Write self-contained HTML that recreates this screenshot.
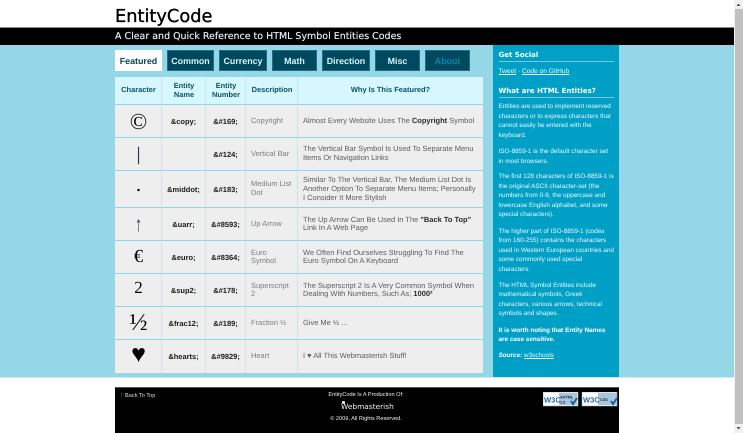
<!DOCTYPE html>
<html><head><meta charset="utf-8"><title>EntityCode</title>
<style>
html,body{margin:0;padding:0;width:743px;height:433px;overflow:hidden;background:#fff}
body{position:relative;font-family:"Liberation Sans",Arial,sans-serif;font-size:7.43px;line-height:8.6px;text-rendering:geometricPrecision;white-space:nowrap}
#p{position:absolute;left:0;top:0;width:743px;height:433px;overflow:hidden;filter:blur(.25px)}
.a,.tab,.v,.c,.d,.w,.s{position:absolute}
.tab{top:50px;height:21px;line-height:21px;text-align:center;background:#00495e;border:1px solid #1f6f85;box-sizing:border-box;color:#d4f4fb;font-weight:bold;font-size:8.9px}
.v{top:77px;height:296px;width:1px;background:#cfe3e8}
.h{position:absolute;left:115px;width:368px;height:1px;background:#8fd6ea}
.r{position:absolute;left:115px;width:368px;background:#eee}
.c{left:115px;width:47px;text-align:center;color:#000;font-family:"Liberation Serif","DejaVu Serif",serif;font-size:21px;line-height:24px}
.n{position:absolute;text-align:center;font-weight:bold;color:#1a1a1a;font-size:7.48px;line-height:9px}
.d{left:251px;width:46px;color:#7c7c7c;font-size:7.48px;line-height:8.6px}
.w{left:303px;width:178px;color:#5c5c5c;font-size:7.48px;line-height:8.6px}
.w b{color:#2a2a2a}
.th{position:absolute;text-align:center;font-weight:bold;color:#0d5163;font-size:7.43px;line-height:8.5px}
.s{left:498.5px;width:117px;color:#e9f8fc;font-size:6.38px;line-height:9.6px;margin:0}
.sh{position:absolute;left:498.5px;width:115.5px;color:#fff;font-family:"DejaVu Sans",sans-serif;font-weight:bold;font-size:7px;line-height:11px;border-bottom:1px solid #6fcbe2}
.f{position:absolute;color:#ddd;font-size:5.6px;line-height:7px;white-space:nowrap}
</style></head><body><div id="p">
<div class="a" style="left:115px;top:6px;font-family:'DejaVu Sans',sans-serif;font-size:17.8px;line-height:21px;color:#000;-webkit-text-stroke:.35px #000">EntityCode</div>
<div class="a" style="left:0;top:27px;width:734px;height:18px;background:#000;border-top:1px solid #888;box-sizing:border-box"></div>
<div class="a" style="left:115px;top:30px;font-family:'DejaVu Sans',sans-serif;font-size:9.48px;line-height:13px;color:#eef9fc;-webkit-text-stroke:.1px #eef9fc">A Clear and Quick Reference to HTML Symbol Entities Codes</div>
<div class="a" style="left:0;top:45px;width:734px;height:332px;background:#95d6e7"></div>
<div class="a" style="left:0;top:377px;width:734px;height:1px;background:#c8ebf4"></div>
<div class="a" style="left:493px;top:45px;width:126px;height:332px;background:#00a0c6"></div>

<div class="tab" style="left:115px;width:47px;background:#fff;border-color:#fff;color:#0a4254">Featured</div>
<div class="tab" style="left:167px;width:47px">Common</div>
<div class="tab" style="left:219px;width:48px">Currency</div>
<div class="tab" style="left:272px;width:45px">Math</div>
<div class="tab" style="left:322px;width:48px">Direction</div>
<div class="tab" style="left:375px;width:45px">Misc</div>
<div class="tab" style="left:425px;width:45px;color:#0b86a5">About</div>

<div class="a" style="left:115px;top:77px;width:368px;height:28px;background:#d6f7fe"></div>
<div class="r" style="top:105px;height:268px"></div>
<div class="th" style="left:115px;width:47px;top:86px">Character</div>
<div class="th" style="left:162px;width:44px;top:82px">Entity<br>Name</div>
<div class="th" style="left:206px;width:40px;top:82px">Entity<br>Number</div>
<div class="th" style="left:246px;width:52px;top:86px">Description</div>
<div class="th" style="left:298px;width:185px;top:86px">Why Is This Featured?</div>

<div class="v" style="left:161px"></div><div class="v" style="left:205px"></div><div class="v" style="left:245px"></div><div class="v" style="left:297px"></div>
<div class="h" style="top:104px"></div><div class="h" style="top:137px"></div><div class="h" style="top:170px"></div><div class="h" style="top:207px"></div><div class="h" style="top:240px"></div><div class="h" style="top:273px"></div><div class="h" style="top:306px"></div><div class="h" style="top:339px"></div>

<div class="c" style="top:110px;font-size:23px">©</div>
<div class="c" style="top:143px;font-size:19px;color:#1c1c50;-webkit-text-stroke:.2px #4a3a50">|</div>
<div class="c" style="top:178px">·</div>
<div class="c" style="top:212px;color:#1c3a58;transform:scaleX(.7)">↑</div>
<div class="c" style="top:245px;font-size:18.5px">€</div>
<div class="c" style="top:276px;font-size:17px">2</div>
<div class="c" style="top:311px;font-size:24px;font-weight:400">½</div>
<div class="c" style="top:343px;font-size:25px">♥</div>

<div class="n" style="left:162px;width:43px;top:116.5px">&amp;copy;</div>
<div class="n" style="left:206px;width:39px;top:116.5px">&amp;#169;</div>
<div class="n" style="left:206px;width:39px;top:149.5px">&amp;#124;</div>
<div class="n" style="left:162px;width:43px;top:184.5px">&amp;middot;</div>
<div class="n" style="left:206px;width:39px;top:184.5px">&amp;#183;</div>
<div class="n" style="left:162px;width:43px;top:220px">&amp;uarr;</div>
<div class="n" style="left:206px;width:39px;top:220px">&amp;#8593;</div>
<div class="n" style="left:162px;width:43px;top:252.5px">&amp;euro;</div>
<div class="n" style="left:206px;width:39px;top:252.5px">&amp;#8364;</div>
<div class="n" style="left:162px;width:43px;top:286px">&amp;sup2;</div>
<div class="n" style="left:206px;width:39px;top:286px">&amp;#178;</div>
<div class="n" style="left:162px;width:43px;top:318.5px">&amp;frac12;</div>
<div class="n" style="left:206px;width:39px;top:318.5px">&amp;#189;</div>
<div class="n" style="left:162px;width:43px;top:351.5px">&amp;hearts;</div>
<div class="n" style="left:206px;width:39px;top:351.5px">&amp;#9829;</div>

<div class="d" style="top:116.7px">Copyright</div>
<div class="d" style="top:149.7px">Vertical Bar</div>
<div class="d" style="top:180.4px">Medium List<br>Dot</div>
<div class="d" style="top:220px">Up Arrow</div>
<div class="d" style="top:248.7px">Euro<br>Symbol</div>
<div class="d" style="top:281.7px">Superscript<br>2</div>
<div class="d" style="top:318.7px">Fraction ½</div>
<div class="d" style="top:351.7px">Heart</div>

<div class="w" style="top:116.7px">Almost Every Website Uses The <b>Copyright</b> Symbol</div>
<div class="w" style="top:145.4px">The Vertical Bar Symbol Is Used To Separate Menu<br>Items Or Navigation Links</div>
<div class="w" style="top:176.4px">Similar To The Vertical Bar, The Medium List Dot Is<br>Another Option To Separate Menu Items; Personally<br>I Consider It More Stylish</div>
<div class="w" style="top:215.7px">The Up Arrow Can Be Used In The <b>"Back To Top"</b><br>Link In A Web Page</div>
<div class="w" style="top:248.7px">We Often Find Ourselves Struggling To Find The<br>Euro Symbol On A Keyboard</div>
<div class="w" style="top:281.7px">The Superscript 2 Is A Very Common Symbol When<br>Dealing With Numbers, Such As; <b>1000²</b></div>
<div class="w" style="top:318.7px">Give Me ½ ...</div>
<div class="w" style="top:351.7px">I ♥ All This Webmasterish Stuff!</div>

<div class="sh" style="top:50px">Get Social</div>
<div class="a" style="left:498.5px;top:66.5px;color:#e8f8fc;font-size:6.6px;line-height:9px"><span style="text-decoration:underline">Tweet</span> · <span style="text-decoration:underline">Code on GitHub</span></div>
<div class="sh" style="top:86px">What are HTML Entities?</div>
<div class="s" style="top:102px">Entities are used to implement reserved<br>characters or to express characters that<br>cannot easily be entered with the<br>keyboard.</div>
<div class="s" style="top:147px">ISO-8859-1 is the default character set<br>in most browsers.</div>
<div class="s" style="top:172px">The first 128 characters of ISO-8859-1 is<br>the original ASCII character-set (the<br>numbers from 0-9, the uppercase and<br>lowercase English alphabet, and some<br>special characters).</div>
<div class="s" style="top:226.5px">The higher part of ISO-8859-1 (codes<br>from 160-255) contains the characters<br>used in Western European countries and<br>some commonly used special<br>characters.</div>
<div class="s" style="top:280.5px">The HTML Symbol Entities include<br>mathematical symbols, Greek<br>characters, various arrows, technical<br>symbols and shapes.</div>
<div class="s" style="top:325.5px;color:#fff"><b>It is worth noting that Entity Names<br>are case sensitive.</b></div>
<div class="s" style="top:350.5px"><b style="color:#fff"><i>Source:</i></b> <span style="text-decoration:underline">w3schools</span></div>

<div class="a" style="left:115px;top:387px;width:504px;height:46px;background:#000;border-top:1px solid #555;box-sizing:border-box"></div>
<div class="f" style="left:120px;top:392px"><span style="color:#1aa6d0;font-size:7px;font-weight:bold">↑</span> Back To Top</div>
<div class="f" style="left:253px;width:226px;text-align:center;top:392px;color:#eee">EntityCode Is A Production Of:</div>
<div class="a" style="left:341px;top:401px;font-size:7.4px;line-height:11px;color:#eee;font-family:'DejaVu Sans',sans-serif">Webmasterish</div>
<div class="a" style="left:342px;top:401px;width:3px;height:3px;border-radius:50%;background:#fff"></div>
<div class="f" style="left:253px;width:226px;text-align:center;top:416px;color:#eee">© 2009, All Rights Reserved.</div>

<svg class="a" style="left:543px;top:392px" width="76" height="15" viewBox="0 0 76 15">
<rect x="0" y="0" width="35" height="14" fill="#fff" stroke="#8aa" stroke-width=".6"/><rect x="16" y="1" width="18" height="12" fill="#a9c6dd"/>
<text x="1" y="10.5" font-family="Liberation Sans" font-weight="bold" font-size="7.6" fill="#2a6ca5">W3C</text>
<text x="17" y="6.5" font-family="Liberation Sans" font-weight="bold" font-size="3.8" fill="#223">XHTML</text>
<text x="17" y="11.5" font-family="Liberation Sans" font-weight="bold" font-size="3.8" fill="#223">1.0</text>
<path d="M28 9l2 3 4-6" fill="none" stroke="#11609f" stroke-width="2"/>
<rect x="39" y="0" width="35" height="14" fill="#fff" stroke="#8aa" stroke-width=".6"/><rect x="55" y="1" width="19" height="12" fill="#a9c6dd"/>
<text x="40" y="10.5" font-family="Liberation Sans" font-weight="bold" font-size="7.6" fill="#2a6ca5">W3C</text>
<text x="57" y="9" font-family="Liberation Sans" font-weight="bold" font-size="3.8" fill="#223">CSS</text>
<path d="M68 9l2 3 4-6" fill="none" stroke="#11609f" stroke-width="2"/>
</svg>

<div class="a" style="left:734px;top:0;width:9px;height:433px;background:#f1f1f1"></div>
<div class="a" style="left:735px;top:9px;width:8px;height:415px;background:#c1c1c1"></div>
<svg class="a" style="left:734px;top:0" width="9" height="433" viewBox="0 0 9 433"><path d="M2.5 6L4.5 3.5 6.5 6z" fill="#555"/><path d="M2.5 427L4.5 429.5 6.5 427z" fill="#555"/></svg>
</div></body></html>
